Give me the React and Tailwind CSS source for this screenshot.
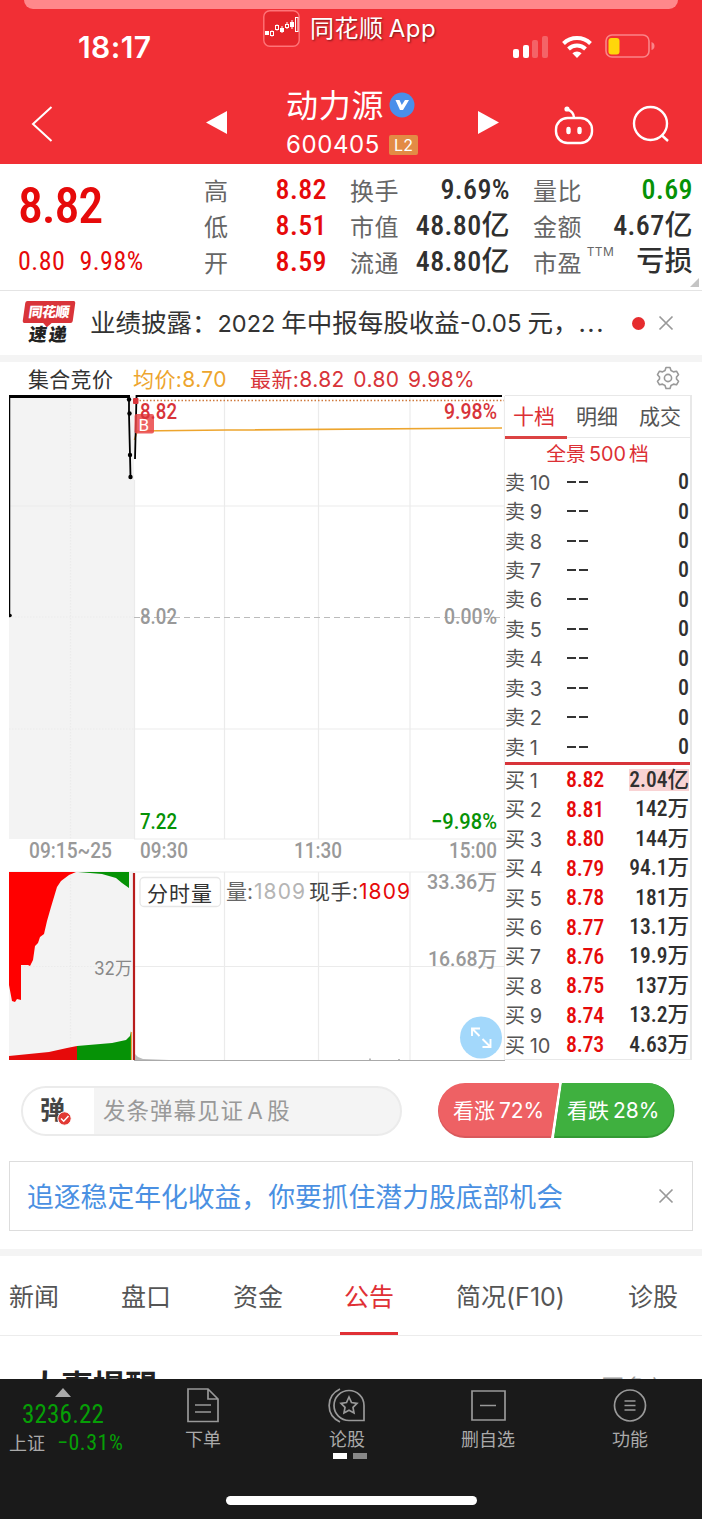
import React from "react";

const din = "font-[Roboto,'Noto_Sans_CJK_SC',sans-serif] font-stretch-[75%]";

const quoteColumns = [
  {
    width: "w-[123px]",
    rows: [
      { label: "高", value: "8.82", color: "text-[#e60a0a]" },
      { label: "低", value: "8.51", color: "text-[#e60a0a]" },
      { label: "开", value: "8.59", color: "text-[#e60a0a]" },
    ],
  },
  {
    width: "w-[160px]",
    rows: [
      { label: "换手", value: "9.69%", color: "text-[#303030]" },
      { label: "市值", value: "48.80亿", color: "text-[#303030]" },
      { label: "流通", value: "48.80亿", color: "text-[#303030]" },
    ],
  },
  {
    width: "w-[160px]",
    rows: [
      { label: "量比", value: "0.69", color: "text-[#069206]" },
      { label: "金额", value: "4.67亿", color: "text-[#303030]" },
      { label: "市盈", sup: "TTM", value: "亏损", color: "text-[#303030]" },
    ],
  },
];

const sells = [10, 9, 8, 7, 6, 5, 4, 3, 2, 1];

const buys = [
  { price: "8.82", amount: "2.04亿" },
  { price: "8.81", amount: "142万" },
  { price: "8.80", amount: "144万" },
  { price: "8.79", amount: "94.1万" },
  { price: "8.78", amount: "181万" },
  { price: "8.77", amount: "13.1万" },
  { price: "8.76", amount: "19.9万" },
  { price: "8.75", amount: "137万" },
  { price: "8.74", amount: "13.2万" },
  { price: "8.73", amount: "4.63万" },
];

const Header = () => (
  <header className="h-[164px] shrink-0 bg-[#f12f35] text-white">
    <div className="mx-[24px] h-[9px] rounded-b-[24px] bg-[#ff888b]" />

    {/* Status bar */}
    <div className="flex h-[71px] items-start">
      <div className="w-[263px] pl-[78px] pt-[19px] text-[30px] leading-[38px] font-semibold tracking-[0.4px]">
        18:17
      </div>
      <div className="flex w-[250px] items-center">
        <svg className="mt-px h-[37px] w-[37px]" viewBox="0 0 37 37" fill="none">
          <rect x="0.8" y="0.8" width="35.4" height="35.4" rx="6" fill="#e5252b" stroke="#ff7478" strokeWidth="1.4" />
          <g stroke="#fff" strokeWidth="1">
            <rect x="2.5" y="21.5" width="3" height="3" fill="#fff" />
            <path d="M9 20v7M14 14v7" strokeWidth="0.6" />
            <rect x="7.5" y="21.5" width="3" height="4" fill="#e5252b" />
            <rect x="12.5" y="15.5" width="3" height="4" fill="#e5252b" />
            <rect x="17.5" y="18.5" width="3" height="3" fill="#fff" />
            <path d="M24 12v7M29 10v9M19 16v7" />
            <rect x="22.5" y="14.5" width="3" height="3" fill="#e5252b" />
            <rect x="27.5" y="12.5" width="3" height="4" fill="#fff" />
            <rect x="32.5" y="7.5" width="2.5" height="14" />
          </g>
        </svg>
        <span className="ml-[10px] mt-[2px] text-[24px] leading-[36px] tracking-[0.5px] [word-spacing:-2px] [text-shadow:1px_1px_2px_rgba(0,0,0,.5)]">
          同花顺 App
        </span>
      </div>
      <div className="flex items-end pt-[25px]">
        <div className="flex h-[24px] items-end gap-[3.5px] pb-px">
          <i className="h-[9px] w-[6px] rounded-[2px] bg-white" />
          <i className="h-[13px] w-[6px] rounded-[2px] bg-white" />
          <i className="h-[18px] w-[6px] rounded-[2px] bg-white/25" />
          <i className="h-[22px] w-[6px] rounded-[2px] bg-white/25" />
        </div>
        <svg className="ml-[14px] mb-px h-[23px] w-[30px]" viewBox="0 0 30 23" fill="none" stroke="#fff" strokeWidth="4">
          <path d="M1.5 8.5a19.500 19.500 0 0 1 27 0" />
          <path d="M6.5 14a12.300 12.300 0 0 1 17 0" />
          <path d="m15 23-4.600-4.700a6.500 6.500 0 0 1 9.200 0z" fill="#fff" stroke="none" />
        </svg>
        <svg className="ml-[13px] h-[25px] w-[51px]" viewBox="0 0 51 25">
          <rect x="1" y="1" width="43" height="22" rx="6" fill="none" stroke="#fa8488" strokeWidth="1.6" />
          <rect x="3.5" y="4" width="11" height="16.5" rx="3" fill="#ffd60a" />
          <path d="M46.5 8v8q3-1 3-4t-3-4z" fill="#fa8488" />
        </svg>
      </div>
    </div>

    {/* Stock title */}
    <div className="flex h-[84px] items-center">
      <svg className="ml-[31px] mt-[4px] h-[38px] w-[22px]" viewBox="0 0 22 38" fill="none" stroke="#fff" strokeWidth="2">
        <path d="M20.5 2 2 19l18.500 17" />
      </svg>
      <svg className="ml-[153px] h-[23px] w-[21px]" viewBox="0 0 21 23" fill="#fff">
        <path d="M0 11.500 21 0v23z" />
      </svg>
      <div className="ml-[59px] w-[132px] pt-[3px]">
        <div className="flex h-[42px] items-center">
          <span className="text-[32px] leading-[42px] tracking-[0.7px]">动力源</span>
          <svg className="ml-[5px] mb-[2px] h-[26px] w-[26px]" viewBox="0 0 26 26">
            <circle cx="13" cy="13" r="12.5" fill="#4a8fea" />
            <path d="M6.500 8h4l2.300 5L16 8h4l-6 10h-3z" fill="#fff" />
          </svg>
        </div>
        <div className="flex h-[36px] items-center">
          <span className="text-[24px] leading-[36px] tracking-[0.6px]">600405</span>
          <span className="ml-[9px] flex h-[20px] w-[29px] items-center justify-center rounded-[2px] bg-[#e38b45] text-[16px] leading-none">
            L2
          </span>
        </div>
      </div>
      <svg className="ml-[60px] h-[23px] w-[21px]" viewBox="0 0 21 23" fill="#fff">
        <path d="M21 11.500 0 0v23z" />
      </svg>
      <svg className="ml-[55px] mt-[5px] h-[40px] w-[40px]" viewBox="0 0 40 40" fill="none" stroke="#fff" strokeWidth="2.4" strokeLinecap="round">
        <rect x="2" y="13" width="36" height="25" rx="11.5" />
        <path d="M20 12.500q-.5-6-6.500-8" />
        <circle cx="13" cy="4" r="1.4" fill="#fff" />
        <path d="M14.500 24v3M25.500 24v3" strokeWidth="4.4" />
      </svg>
      <svg className="ml-[38px] mt-[3px] h-[38px] w-[38px]" viewBox="0 0 38 38" fill="none" stroke="#fff" strokeWidth="2.4">
        <circle cx="18.5" cy="18.5" r="16.5" />
        <path d="m29.500 30 6.500 6" />
      </svg>
    </div>
  </header>
);

const Quote = () => (
  <section className="relative flex h-[127px] shrink-0 border-b border-[#e4e4e4]">
    <div className={`w-[204px] pl-[18px] text-[#e60a0a] ${din}`}>
      <div className="mt-[12px] text-[50px] leading-[60px] font-medium tracking-[-1.2px]">8.82</div>
      <div className="mt-[9px] flex gap-[14px] text-[26px] leading-[32px] tracking-[0.5px]">
        <span>0.80</span>
        <span>9.98%</span>
      </div>
    </div>
    <div className="flex gap-[23px] pt-[8px]">
      {quoteColumns.map((col) => (
        <div key={col.rows[0].label} className={col.width}>
          {col.rows.map((row) => (
            <div key={row.label} className="flex h-[36px] items-center justify-between">
              <span className="mt-[4px] flex text-[24px] leading-[36px] tracking-[0.4px] whitespace-nowrap text-[#666]">
                {row.label}
                {row.sup && <span className="mt-[-12px] ml-[5px] text-[12px] tracking-[0.3px]">{row.sup}</span>}
              </span>
              <span className={`text-[28px] leading-[36px] font-medium tracking-[0.4px] whitespace-nowrap ${din} ${row.color}`}>
                {row.value}
              </span>
            </div>
          ))}
        </div>
      ))}
    </div>
    <svg className="absolute right-[3px] bottom-[3px] h-[9px] w-[9px]" viewBox="0 0 9 9" fill="#c4c4c4">
      <path d="M9 0v9H0z" />
    </svg>
  </section>
);

const CloseIcon = ({ className }) => (
  <svg className={`h-[16px] w-[16px] ${className}`} viewBox="0 0 16 16" stroke="#999" strokeWidth="1.7">
    <path d="m1.500 1.500 13 13m0-13-13 13" />
  </svg>
);

const News = () => (
  <section className="flex h-[64px] shrink-0 items-center">
    <div className="ml-[21px] flex w-[55px] flex-col items-center">
      <div className="relative flex h-[22px] w-[50px] -skew-x-8 items-center justify-center rounded-[2px] bg-[#d9343a] text-[14px] leading-none font-black tracking-[-0.5px] text-white">
        同花顺
        <i className="absolute -bottom-[3px] h-[6px] w-[6px] rotate-45 bg-[#d9343a]" />
      </div>
      <div className="-skew-x-8 pt-[2px] text-[18px] leading-[20px] font-black tracking-[2px] text-[#222]">速递</div>
    </div>
    <span className="ml-[14px] w-[532px] text-[25.5px] whitespace-nowrap text-[#333]">
      业绩披露：<span className="mr-[6px] text-[23.5px]">2022</span>年中报每股收益
      <span className="mr-[6px] text-[24px]">-0.05</span>元，
      <span className="tracking-[1.5px]">...</span>
    </span>
    <i className="ml-[10px] h-[13px] w-[13px] rounded-full bg-[#e62c2e]" />
    <CloseIcon className="ml-[13px]" />
  </section>
);

const Legend = () => (
  <div className="flex h-[33px] shrink-0 items-center pt-[3px] text-[21px] whitespace-nowrap">
    <span className="ml-[28px] w-[105px] text-[#333] tracking-[0.3px]">集合竞价</span>
    <span className="w-[117px] text-[#eda52e] tracking-[0.4px]">均价:8.70</span>
    <span className="w-[406px] text-[#d8343a] tracking-[0.4px] [word-spacing:-2px]">最新:8.82&nbsp; 0.80&nbsp; 9.98%</span>
    <svg className="mb-[4px] h-[24px] w-[24px]" viewBox="0 0 24 24" fill="none" stroke="#999" strokeWidth="1.6" strokeLinejoin="round">
      <path d="M10 1.500h4l1 3 2.500 1.400 3-.7 2 3.500-2 2.300v2l2 2.300-2 3.500-3-.7L15 19.500l-1 3h-4l-1-3-2.500-1.400-3 .7-2-3.500 2-2.300v-2l-2-2.300 2-3.500 3 .7L9 4.500z" />
      <circle cx="12" cy="12" r="3.6" />
    </svg>
  </div>
);

const Chart = () => (
  <svg
    className="h-[667px] w-[496px] shrink-0 font-[Roboto,'Noto_Sans_CJK_SC',sans-serif]"
    viewBox="9 395 496 667"
    fill="none"
  >
    <path d="M9 396h125v443H9zM9 872h125v188H9z" fill="#f3f3f3" />
    <g stroke="#ebebeb" strokeWidth="1.2">
      <path d="M9 506h496M134 729h371M134 839h371M9 872h496M134 966.500h371M224.500 396v443M318.500 396v443M410 396v443M224.500 872v188M318.500 872v188M410 872v188M134.500 480v359M504.500 396v664" />
      <path d="M70.500 396v443M70.500 872v188M9 617h125M9 966.500h125M9 729h125" strokeDasharray="1.5 1.5" />
    </g>
    <path d="M134 617.500h371" stroke="#bbb" strokeDasharray="6 4" />
    <path d="M134 1060.500h371" stroke="#aaa" />

    {/* Auction line */}
    <path d="M9.500 616V396" stroke="#000" strokeWidth="1.5" />
    <path d="M9 396.500h121" stroke="#000" strokeWidth="3" />
    <path d="M129 397v17l1 41 .5 22" stroke="#000" strokeWidth="1.8" />
    <g fill="#000">
      <circle cx="129" cy="399.5" r="2.2" />
      <circle cx="129.5" cy="413.5" r="2.2" />
      <circle cx="130" cy="455" r="2.2" />
      <circle cx="130.5" cy="477" r="2.2" />
      <circle cx="10" cy="615.5" r="1.8" />
    </g>

    {/* Price and average */}
    <path d="M134.500 440 137 431l90-1 275-2" stroke="#eda52e" strokeWidth="1.7" />
    <path d="M135 459 136.500 396H502" stroke="#000" strokeWidth="1.8" />
    <path d="M136 400.500h368" stroke="#d07a3c" strokeWidth="1.5" strokeDasharray="1.5 2" />
    <rect x="133" y="398" width="5.5" height="6" rx="1" fill="#d8343a" />
    <rect x="134.5" y="414" width="19.5" height="19.5" rx="2" fill="#ea4548" fillOpacity=".85" />
    <text x="138.5" y="430.5" fontSize="17" fill="#fff" textLength="11">B</text>

    <g fontSize="22" fontWeight="500">
      <text x="140" y="419" fill="#d8343a" textLength="37" lengthAdjust="spacingAndGlyphs">8.82</text>
      <text x="444" y="419" fill="#d8343a" textLength="53" lengthAdjust="spacingAndGlyphs">9.98%</text>
      <text x="140" y="829" fill="#069206" textLength="37" lengthAdjust="spacingAndGlyphs">7.22</text>
      <text x="431" y="829" fill="#069206" textLength="66" lengthAdjust="spacingAndGlyphs">−9.98%</text>
      <g fill="#999">
        <text x="140" y="624" textLength="37" lengthAdjust="spacingAndGlyphs">8.02</text>
        <text x="444" y="624" textLength="53" lengthAdjust="spacingAndGlyphs">0.00%</text>
        <text x="29" y="858" textLength="83" lengthAdjust="spacingAndGlyphs">09:15~25</text>
        <text x="140" y="858" textLength="48" lengthAdjust="spacingAndGlyphs">09:30</text>
        <text x="294" y="858" textLength="48" lengthAdjust="spacingAndGlyphs">11:30</text>
        <text x="449" y="858" textLength="48" lengthAdjust="spacingAndGlyphs">15:00</text>
        <text x="427" y="889" fontSize="21" textLength="70" lengthAdjust="spacingAndGlyphs">33.36万</text>
        <text x="428" y="966" fontSize="21" textLength="69" lengthAdjust="spacingAndGlyphs">16.68万</text>
      </g>
    </g>

    {/* Auction volume */}
    <path d="M9 872h67l-7 3-8 6-4 6-6 20-4 14-3 13-4 3-2 6-3 3-2 14-3 6-2-1h-7v35l-4-1-2 3-3-1-3-16z" fill="#f00" />
    <path d="M78 872h51v16l-7-5-6-5-14-4z" fill="#069206" />
    <path d="M9 1060v-4l40-4 18-4 10-2v14z" fill="#e60a0a" />
    <path d="M77 1060v-14l35-3 14-3 4-4 1-5v29z" fill="#069206" />
    <path d="M131.500 1032v28" stroke="#f0a040" strokeWidth="1.2" />
    <path d="M134 873v187" stroke="#b81c1c" strokeWidth="2.2" />
    <path d="M135 1060v-6l3 3 5 2 26 1zM369 1060v-1.500h2v1.500zM398 1060v-1h2v1z" fill="#bbb" />
    <text x="94" y="975" fontSize="18" fill="#888" fontFamily="Inter, 'Noto Sans CJK SC', sans-serif" textLength="38" lengthAdjust="spacingAndGlyphs">32万</text>

    {/* Volume legend */}
    <rect x="140" y="877.5" width="80.5" height="29" rx="4" fill="#fff" stroke="#e6e6e6" strokeWidth="1.3" />
    <g fontSize="21" fontFamily="Inter, 'Noto Sans CJK SC', sans-serif">
      <text x="147" y="901" fill="#333" textLength="65">分时量</text>
      <text x="226" y="899" fill="#666" textLength="27">量:</text>
      <text x="254" y="899" fill="#b5b5b5" textLength="51">1809</text>
      <text x="309" y="899" fill="#444" textLength="49">现手:</text>
      <text x="359" y="899" fill="#e60a0a" textLength="51">1809</text>
    </g>

    <circle cx="481" cy="1037.5" r="21" fill="#a3d8fb" />
    <path d="M479.500 1036 472 1028.500m0 7.500v-7.500h8M482.500 1039l8 8m0-8v8h-8" stroke="#fff" strokeWidth="1.9" />
  </svg>
);

const OrderBook = () => (
  <div className="flex h-[665px] w-[187px] flex-col border-t border-r-2 border-b border-[#e8e8e8]">
    <div className="flex h-[42px] shrink-0 border-b border-[#e8e8e8] text-[21px] leading-[42px] text-[#555]">
      <span className="h-[43px] w-[62px] border-b-3 border-[#dc4343] pl-[8px] text-[#dc3035]">十档</span>
      <span className="w-[63px] pl-[9px]">明细</span>
      <span className="pl-[9px]">成交</span>
    </div>
    <div className="h-[30px] shrink-0 text-center text-[19.8px] leading-[32px] text-[#dc3035] [word-spacing:-2.5px]">
      全景 500 档
    </div>
    {sells.map((n) => (
      <div key={`sell-${n}`} className="flex h-[29.43px] items-center pr-[1px] text-[20px] [word-spacing:-1px]">
        <span className="w-[61px] text-[#555]">卖 {n}</span>
        <svg className="mb-[2px] h-[4px] w-[24px]" viewBox="0 0 24 4" stroke="#333" strokeWidth="2">
          <path d="M1 2h9M13 2h9" />
        </svg>
        <span className={`ml-auto pb-[2px] text-[22px] font-medium text-[#303030] ${din}`}>0</span>
      </div>
    ))}
    <div className="h-[3px] shrink-0 bg-[#d8343a]" />
    {buys.map((row, i) => (
      <div key={`buy-${row.price}`} className="flex h-[29.43px] items-center pr-[1px] text-[20px] [word-spacing:-1px]">
        <span className="w-[61px] pt-[2px] text-[#555]">买 {i + 1}</span>
        <span className={`text-[22px] font-medium text-[#e60a0a] tracking-[-0.3px] ${din}`}>{row.price}</span>
        <span
          className={`ml-auto text-[21.5px] leading-[22px] font-medium text-[#303030] ${din} ${i === 0 ? "bg-[#f9d3d4]" : ""}`}
        >
          {row.amount}
        </span>
      </div>
    ))}
  </div>
);

const Barrage = () => (
  <section className="flex h-[100px] shrink-0 items-center pl-[21px]">
    <div className="flex h-[50px] w-[381px] items-center overflow-hidden rounded-full border-2 border-[#ebebeb] bg-[#f4f4f4]">
      <div className="relative flex h-full w-[71px] items-center bg-white pl-[17px] text-[25px] font-bold text-[#444]">
        弹
        <svg className="absolute top-[23px] left-[34px] h-[15px] w-[15px]" viewBox="0 0 15 15" fill="none">
          <circle cx="7.5" cy="7.5" r="6.7" fill="#e23a34" stroke="#fff" />
          <path d="m4 7.500 2.700 2.700L11.500 5" stroke="#fff" strokeWidth="1.5" />
        </svg>
      </div>
      <span className="pl-[9px] text-[22.5px] tracking-[1px] text-[#999] [word-spacing:-4px]">发条弹幕见证 A 股</span>
    </div>
    <div className="relative ml-[34px] h-[58px] w-[240px]">
      <svg className="h-[60px] w-[240px]" viewBox="0 0 240 60">
        <path d="M29 2h94l-8 54H29a27 27 0 0 1 0-54z" fill="#d9595c" />
        <path d="M29 1h94l-8 53H29a26.500 26.500 0 0 1 0-53z" fill="#ee6164" />
        <path d="M126 1h85a27 27 0 0 1 0 55h-93z" fill="#339a33" />
        <path d="M126 1h85a26.500 26.500 0 0 1 0 53h-92.500z" fill="#3fb03f" />
      </svg>
      <div className="absolute inset-0 flex items-center text-[21px] whitespace-nowrap text-white [word-spacing:-2px]">
        <span className="w-[114px] pl-[17px]">看涨 72%</span>
        <span className="pl-[17px]">看跌 28%</span>
      </div>
    </div>
  </section>
);

const tabs = [
  { name: "新闻", width: "w-[112px]" },
  { name: "盘口", width: "w-[112px]" },
  { name: "资金", width: "w-[107px]" },
  { name: "公告", width: "w-[58px]", active: true },
  { name: "简况(F10)", width: "w-[172px]" },
  { name: "诊股", width: "w-[60px]" },
];

const BottomBar = () => (
  <nav className="h-[140px] shrink-0 bg-[#1a1a1a] text-[#aaa]">
    <div className="flex h-[83px] text-[18px] leading-[26px]">
      <div className={`w-[132px] text-[#069f06] ${din}`}>
        <svg className="ml-[55px] mt-[9px] h-[9px] w-[16px]" viewBox="0 0 16 9" fill="#aaa">
          <path d="M8 0 16 9H0z" />
        </svg>
        <div className="ml-[22px] mt-[4px] text-[25px] leading-[28px] tracking-[0.2px]">3236.22</div>
        <div className="flex pl-[9px] text-[22px] leading-[28px] tracking-[0.5px]">
          <span className="w-[48px] pt-px text-[18px] tracking-normal text-[#aaa]">上证</span>
          −0.31%
        </div>
      </div>
      <div className="flex w-[142px] flex-col items-center pt-[9px]">
        <svg className="h-[35px] w-[32px]" viewBox="0 0 32 35" fill="none" stroke="#999" strokeWidth="1.7">
          <path d="M1 1h20l10 10v22.500H1zM21 1v10h10M8 17h16M8 24h16" />
        </svg>
        <span className="mt-[4px]">下单</span>
      </div>
      <div className="flex w-[146px] flex-col items-center pt-[9px]">
        <svg className="h-[35px] w-[38px]" viewBox="0 0 38 35" fill="none" stroke="#999" strokeWidth="1.7">
          <path d="M36 32.500H21a15 15 0 1 1 15-15zM12 1C-2.500 8-2.500 27 12 34" />
          <path d="m21 9 2.500 5.500 5.500.8-4 4 1 5.700-5-2.700-5 2.700 1-5.700-4-4 5.500-.8z" />
        </svg>
        <span className="mt-[4px]">论股</span>
        <div className="ml-[6px] flex gap-[6px]">
          <i className="h-[6px] w-[14px] bg-white" />
          <i className="h-[6px] w-[14px] bg-[#888]" />
        </div>
      </div>
      <div className="flex w-[136px] flex-col items-center pt-[9px]">
        <svg className="h-[35px] w-[36px]" viewBox="0 0 36 35" fill="none" stroke="#999" strokeWidth="1.7">
          <path d="M2 3h33v29H2zM10 17.500h16" />
        </svg>
        <span className="mt-[4px]">删自选</span>
      </div>
      <div className="flex flex-1 flex-col items-center pt-[9px] pl-[2px]">
        <svg className="h-[35px] w-[34px]" viewBox="0 0 34 35" fill="none" stroke="#999" strokeWidth="1.7">
          <circle cx="17" cy="17.5" r="15.5" />
          <path d="M11.500 13h11M11.500 17.500h11M11.500 22h11" />
        </svg>
        <span className="mt-[4px]">功能</span>
      </div>
    </div>
    <div className="mx-auto mt-[34px] h-[9px] w-[251px] rounded-full bg-white" />
  </nav>
);

const App = () => {
  return (
    <div className="flex h-[1519px] w-[702px] flex-col overflow-hidden bg-white font-[Inter,'Noto_Sans_CJK_SC',sans-serif]">
      <Header />
      <Quote />
      <News />
      <div className="h-[7px] shrink-0 bg-[#f4f4f4]" />
      <Legend />
      <div className="flex h-[666px] shrink-0 pl-[9px]">
        <Chart />
        <OrderBook />
      </div>
      <Barrage />
      <div className="mx-[9px] flex h-[70px] shrink-0 items-center justify-between border border-[#ddd] pr-[18px] pl-[17px]">
        <span className="pt-[2px] text-[26.8px] text-[#4a90e2]">追逐稳定年化收益，你要抓住潜力股底部机会</span>
        <CloseIcon className="" />
      </div>
      <div className="mt-[18px] h-[7px] shrink-0 bg-[#f4f4f4]" />

      {/* Tabs */}
      <div className="flex h-[80px] shrink-0 border-b border-[#ececec] pl-[9px] text-[25px] leading-[82px] text-[#555]">
        {tabs.map((tab) =>
          tab.active ? (
            <span key={tab.name} className={`${tab.width} mr-[58px] shrink-0 border-b-3 border-[#e03035] text-center text-[#e03035]`}>
              {tab.name}
            </span>
          ) : (
            <span key={tab.name} className={`${tab.width} shrink-0 whitespace-nowrap`}>
              {tab.name}
            </span>
          )
        )}
      </div>
      <div className="flex h-[43px] shrink-0 justify-between overflow-hidden pt-[33px] pr-[28px] pl-[29px] text-[#222]">
        <span className="text-[32px] leading-[36px] font-bold">大事提醒</span>
        <span className="text-[22px] leading-[36px] text-[#999]">更多 〉</span>
      </div>
      <BottomBar />
    </div>
  );
};

export default App;
